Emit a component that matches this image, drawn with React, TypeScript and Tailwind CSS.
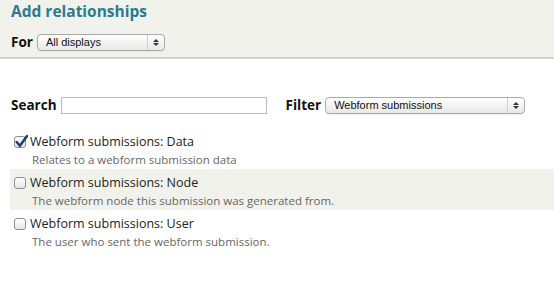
import React from "react";

function Select({ value, className }: { value: string; className: string }) {
  return (
    <div
      className={`relative flex items-center h-[17px] rounded-[4px] border border-[#a9a9a9] bg-gradient-to-b from-white to-[#e8e8e8] shadow-[0_1px_0_rgba(0,0,0,0.05)] ${className}`}
    >
      <span className="pl-[8px] text-[11px] leading-none text-[#111] font-['Liberation_Sans',Arial,sans-serif]">
        {value}
      </span>
      <div className="absolute right-0 top-0 bottom-0 w-[17px] border-l border-[#d0d0d0] flex flex-col items-center justify-center gap-[1px]">
        <div className="w-0 h-0 border-l-[3px] border-r-[3px] border-b-[3px] border-l-transparent border-r-transparent border-b-[#333]" />
        <div className="w-0 h-0 border-l-[3px] border-r-[3px] border-t-[3px] border-l-transparent border-r-transparent border-t-[#333]" />
      </div>
    </div>
  );
}

function Check({ checked }: { checked?: boolean }) {
  return (
    <div className="relative w-[12px] h-[12px] rounded-[3px] border border-[#8f8f8f] bg-gradient-to-b from-white to-[#e6e6e6] shrink-0">
      {checked && (
        <svg
          viewBox="0 0 14 14"
          className="absolute left-[-1px] top-[-3px] w-[15px] h-[15px]"
        >
          <path
            d="M2.5 7.5 L5.5 11 L12 2"
            fill="none"
            stroke="#1f3f75"
            strokeWidth="2.4"
            strokeLinecap="round"
            strokeLinejoin="round"
          />
        </svg>
      )}
    </div>
  );
}

function Row({
  title,
  desc,
  checked,
  shaded,
}: {
  title: string;
  desc: string;
  checked?: boolean;
  shaded?: boolean;
}) {
  return (
    <div className={`ml-[10px] h-[41px] pl-[4px] pt-[6px] ${shaded ? "bg-[#f2f2ec]" : ""}`}>
      <div className="flex items-center gap-[4px] h-[16px]">
        <Check checked={checked} />
        <span className="text-[12.5px] text-[#222]">{title}</span>
      </div>
      <div className="pl-[18px] mt-[1px] text-[11.5px] text-[#666]">{desc}</div>
    </div>
  );
}

export default function App() {
  return (
    <div className="w-[554px] h-[294px] bg-white font-['Open_Sans',sans-serif] overflow-hidden">
      <div className="h-[59px] bg-[#f2f2ec] border-b-2 border-[#d2d2cc] pl-[11px]">
        <h1 className="text-[15.5px] font-bold text-[#2b7b8e] leading-[22px]">Add relationships</h1>
        <div className="flex items-center gap-[4px] mt-[10px]">
          <span className="text-[13.5px] font-bold text-[#111]">For</span>
          <Select value="All displays" className="w-[128px]" />
        </div>
      </div>

      <div className="flex items-center h-[18px] mt-[37px] pl-[11px]">
        <span className="text-[13.5px] font-bold text-[#111] mr-[4px]">Search</span>
        <div className="w-[206px] h-[17px] border border-[#bbb] bg-white" />
        <span className="text-[13.5px] font-bold text-[#111] ml-[19px] mr-[4px]">Filter</span>
        <Select value="Webform submissions" className="w-[200px]" />
      </div>

      <div className="mt-[14px]">
        <Row
          title="Webform submissions: Data"
          desc="Relates to a webform submission data"
          checked
        />
        <Row
          title="Webform submissions: Node"
          desc="The webform node this submission was generated from."
          shaded
        />
        <Row
          title="Webform submissions: User"
          desc="The user who sent the webform submission."
        />
      </div>
    </div>
  );
}
